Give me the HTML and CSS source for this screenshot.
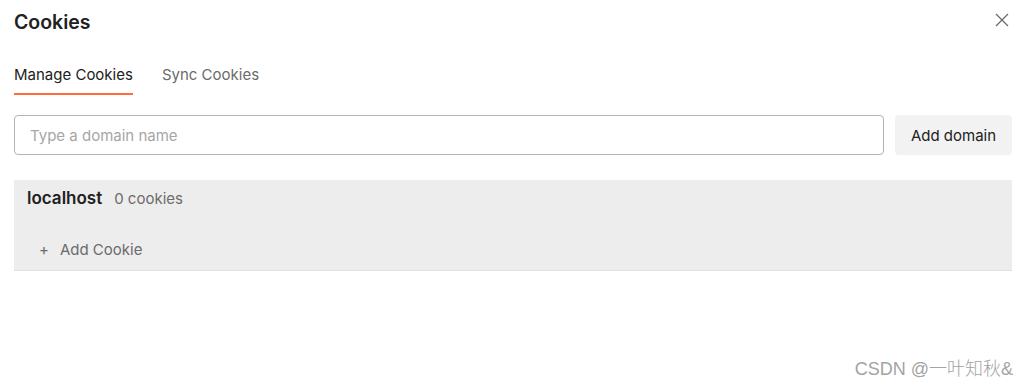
FILE: index.html
```html
<!DOCTYPE html>
<html>
<head>
  <meta charset="utf-8">
  <title>Cookies</title>
  <link rel="stylesheet" href="styles.css">
</head>
<body>
  <div class="modal">
    <div class="modal-header">
      <h1 class="modal-title">Cookies</h1>
      <button class="close-btn" aria-label="Close">
        <svg width="14" height="14" viewBox="0 0 14 14"><path d="M1 1L13 13M13 1L1 13" stroke="#6b6b6b" stroke-width="1.3" fill="none"/></svg>
      </button>
    </div>

    <div class="tabs">
      <div class="tab active">Manage Cookies</div>
      <div class="tab">Sync Cookies</div>
    </div>

    <div class="domain-row">
      <input class="domain-input" type="text" placeholder="Type a domain name">
      <button class="add-btn">Add domain</button>
    </div>

    <div class="domain-card">
      <div class="domain-head">
        <span class="domain-name">localhost</span>
        <span class="domain-count">0 cookies</span>
      </div>
      <div class="add-cookie"><span class="plus">+</span>Add Cookie</div>
    </div>
  </div>

  <div class="watermark">CSDN @一叶知秋&amp;</div>
</body>
</html>
```

FILE: styles.css
```css
* {
  margin: 0;
  padding: 0;
  box-sizing: border-box;
}

body {
  background: #fff;
  font-family: Inter, "Noto Sans", sans-serif;
  color: #212121;
  width: 1028px;
  height: 387px;
  overflow: hidden;
  position: relative;
}

.modal {
  padding: 0 16px 0 14px;
}

.modal-header {
  display: flex;
  justify-content: space-between;
  align-items: center;
  height: 42px;
  padding-top: 2px;
}

.modal-title {
  font-size: 19.5px;
  font-weight: 600;
  color: #212121;
}

.close-btn {
  background: none;
  border: none;
  width: 14px;
  height: 14px;
  margin-right: 3px;
  margin-top: -4px;
  display: flex;
}

.tabs {
  display: flex;
  gap: 29px;
  margin-top: 14px;
  height: 39px;
}

.tab {
  font-size: 15px;
  color: #6b6b6b;
  padding-top: 9px;
  height: 39px;
}

.tab.active {
  color: #212121;
  border-bottom: 2px solid #ff6c37;
}

.domain-row {
  display: flex;
  gap: 11px;
  margin-top: 20px;
}

.domain-input {
  flex: 1;
  height: 40px;
  border: 1px solid #b3b3b3;
  border-radius: 4px;
  padding: 0 15px;
  font-family: inherit;
  font-size: 15px;
  color: #212121;
  outline: none;
}

.domain-input::placeholder {
  color: #a6a6a6;
}

.add-btn {
  width: 117px;
  height: 40px;
  border: none;
  border-radius: 4px;
  background: #f2f2f2;
  font-family: inherit;
  font-size: 15px;
  color: #212121;
}

.domain-card {
  margin-top: 25px;
  background: #ededed;
  border-bottom: 1px solid #e0e0e0;
  height: 91px;
}

.domain-head {
  display: flex;
  align-items: baseline;
  gap: 12px;
  padding: 8px 13px 0;
  height: 40px;
}

.domain-name {
  font-size: 17px;
  font-weight: 600;
  color: #212121;
}

.domain-count {
  font-size: 15px;
  color: #6b6b6b;
}

.add-cookie {
  font-size: 15px;
  color: #6b6b6b;
  padding: 20px 0 0 25px;
}

.plus {
  margin-right: 11px;
}

.watermark {
  position: absolute;
  right: 15px;
  bottom: 7px;
  font-family: "Liberation Sans", "Noto Sans CJK SC", sans-serif;
  font-size: 18px;
  font-weight: 300;
  color: #a3a3a3;
}
```
